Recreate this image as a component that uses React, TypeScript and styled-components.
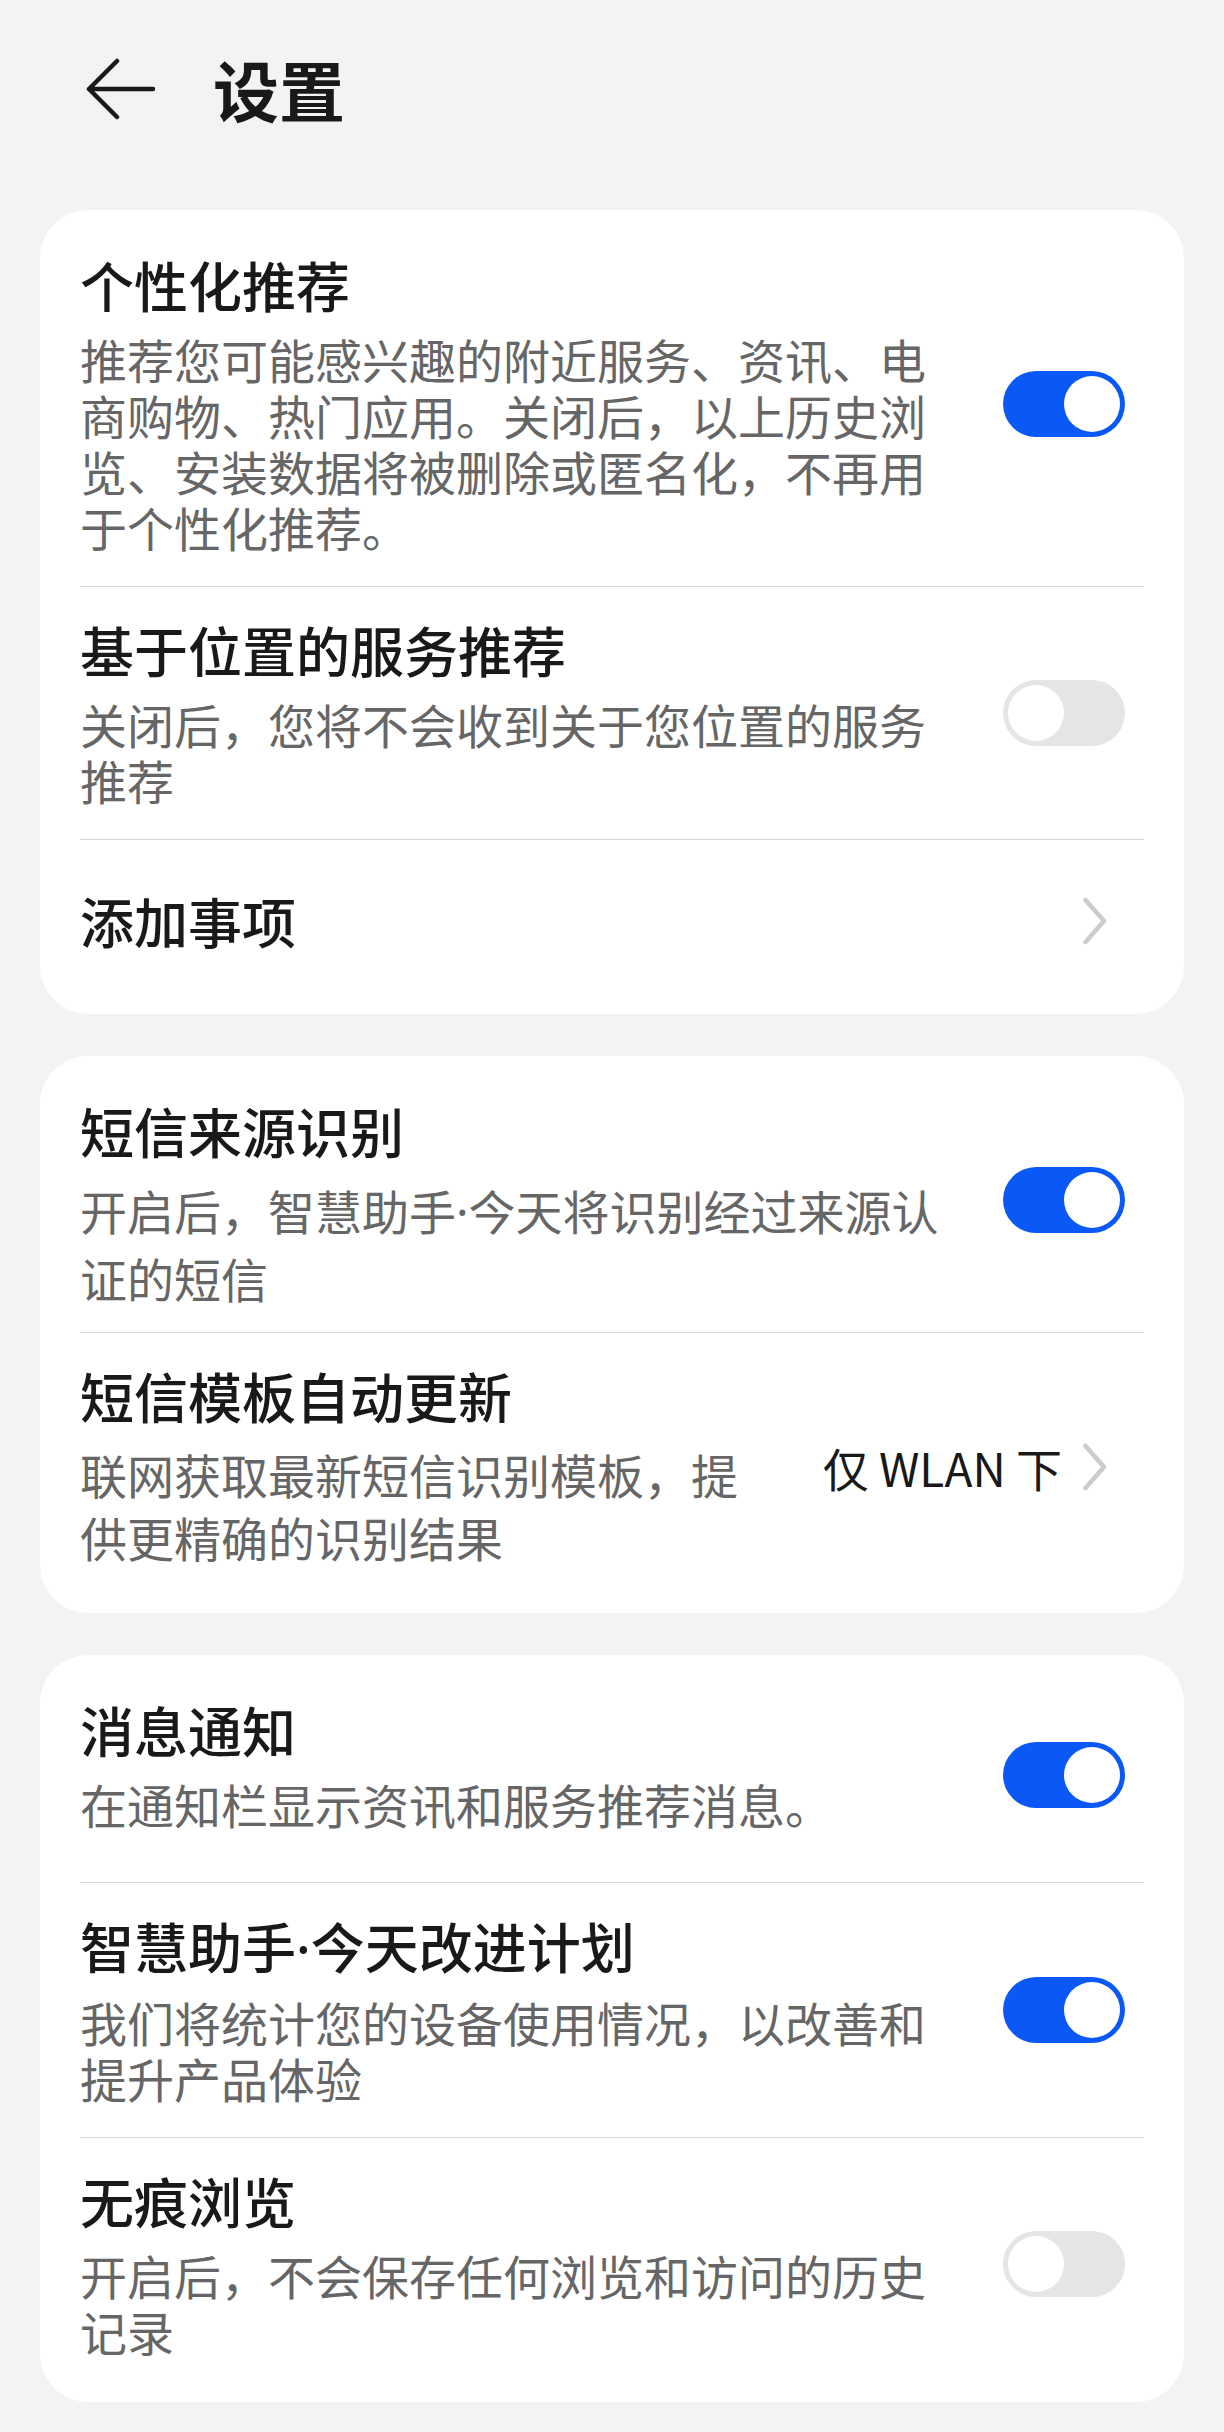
import React from "react";
import styled, { createGlobalStyle } from "styled-components";

const GlobalStyle = createGlobalStyle`
  html, body {
    margin: 0;
    padding: 0;
    background: #F1F3F5;
  }
  body {
    font-family: "Noto Sans CJK SC", "Noto Sans", sans-serif;
    -webkit-font-smoothing: antialiased;
  }
  * { box-sizing: border-box; }
`;

const Page = styled.div`
  width: 1224px;
  min-height: 2432px;
  background: #F1F3F5;
  padding-bottom: 29px;
`;

const Header = styled.header`
  height: 180px;
  display: flex;
  align-items: center;
  padding-left: 84px;
  gap: 55px;
  margin-bottom: 30px;
`;

const BackIcon = styled.svg`
  width: 74px;
  height: 64px;
  flex-shrink: 0;
`;

const PageTitle = styled.h1`
  margin: 0;
  font-size: 66px;
  line-height: 76px;
  font-weight: 700;
  color: #191919;
  transform: translateY(-2px);
`;

const Cards = styled.main`
  display: flex;
  flex-direction: column;
  gap: 42px;
  padding: 0 40px;
`;

const Card = styled.section`
  background: #ffffff;
  border-radius: 48px;
  padding: 12px 40px;
  display: flex;
  flex-direction: column;
`;

const Row = styled.div<{ $minHeight?: number; $divider?: boolean }>`
  display: flex;
  align-items: center;
  gap: 50px;
  min-height: ${(p) => (p.$minHeight ? `${p.$minHeight}px` : "auto")};
  border-bottom: ${(p) => (p.$divider ? "1.5px solid #D6D6D6" : "none")};
`;

const TextCol = styled.div<{ $padBottom?: number }>`
  flex: 1;
  min-width: 0;
  padding-top: 31px;
  padding-bottom: ${(p) => p.$padBottom ?? 31}px;
  display: flex;
  flex-direction: column;
  gap: 14px;
`;

const Title = styled.div`
  font-size: 54px;
  line-height: 64px;
  font-weight: 500;
  color: #191919;
`;

const Desc = styled.div<{ $lh?: number }>`
  font-size: 47px;
  line-height: ${(p) => p.$lh ?? 56}px;
  font-weight: 400;
  color: #666666;
`;

const Dot = styled.span`
  font-family: "Noto Sans", "Roboto", sans-serif;
`;

const Toggle = styled.span<{ $on: boolean }>`
  position: relative;
  flex-shrink: 0;
  width: 122px;
  height: 66px;
  border-radius: 33px;
  margin-right: 19px;
  background: ${(p) => (p.$on ? "#0A59F7" : "#E5E5E5")};
  &::after {
    content: "";
    position: absolute;
    top: 5px;
    left: ${(p) => (p.$on ? "61px" : "5px")};
    width: 56px;
    height: 56px;
    border-radius: 50%;
    background: #ffffff;
  }
`;

const Trailing = styled.div<{ $mr: number }>`
  display: flex;
  align-items: center;
  gap: 20px;
  flex-shrink: 0;
  margin-right: ${(p) => p.$mr}px;
`;

const Value = styled.span`
  font-size: 46px;
  line-height: 56px;
  color: #191919;
  white-space: nowrap;
`;

const ChevronSvg = styled.svg`
  width: 26px;
  height: 48px;
  flex-shrink: 0;
`;

const Chevron = () => (
  <ChevronSvg viewBox="0 0 26 48">
    <path
      d="M3.5 3 L22 24 L3.5 45"
      fill="none"
      stroke="#CCCCCC"
      strokeWidth="4.5"
      strokeLinecap="round"
      strokeLinejoin="round"
    />
  </ChevronSvg>
);

const withDots = (s: string) =>
  s.split("·").map((part, i) => (
    <React.Fragment key={i}>
      {i > 0 && <Dot>·</Dot>}
      {part}
    </React.Fragment>
  ));

type Item = {
  title: string;
  desc?: string;
  lh?: number;
  toggle?: boolean;
  value?: string;
  chevron?: boolean;
  minHeight?: number;
  padBottom?: number;
};

const groups: Item[][] = [
  [
    {
      title: "个性化推荐",
      desc: "推荐您可能感兴趣的附近服务、资讯、电商购物、热门应用。关闭后，以上历史浏览、安装数据将被删除或匿名化，不再用于个性化推荐。",
      toggle: true,
    },
    {
      title: "基于位置的服务推荐",
      desc: "关闭后，您将不会收到关于您位置的服务推荐",
      toggle: false,
    },
    { title: "添加事项", chevron: true, minHeight: 162 },
  ],
  [
    {
      title: "短信来源识别",
      desc: "开启后，智慧助手·今天将识别经过来源认证的短信",
      lh: 65,
      toggle: true,
      padBottom: 22,
    },
    {
      title: "短信模板自动更新",
      desc: "联网获取最新短信识别模板，提供更精确的识别结果",
      lh: 63,
      value: "仅 WLAN 下",
      chevron: true,
      padBottom: 33,
    },
  ],
  [
    {
      title: "消息通知",
      desc: "在通知栏显示资讯和服务推荐消息。",
      toggle: true,
      padBottom: 50,
    },
    {
      title: "智慧助手·今天改进计划",
      desc: "我们将统计您的设备使用情况，以改善和提升产品体验",
      toggle: true,
    },
    {
      title: "无痕浏览",
      desc: "开启后，不会保存任何浏览和访问的历史记录",
      toggle: false,
    },
  ],
];

export default function App() {
  return (
    <Page>
      <GlobalStyle />
      <Header>
        <BackIcon viewBox="0 0 74 64">
          <path
            d="M5 31 L33 3 M5 31 L33 59 M5 31 L69 31"
            fill="none"
            stroke="#191919"
            strokeWidth="4.5"
            strokeLinecap="round"
            strokeLinejoin="round"
          />
        </BackIcon>
        <PageTitle>设置</PageTitle>
      </Header>
      <Cards>
        {groups.map((items, gi) => (
          <Card key={gi}>
            {items.map((it, i) => (
              <Row key={i} $divider={i < items.length - 1} $minHeight={it.minHeight}>
                <TextCol $padBottom={it.padBottom}>
                  <Title>{withDots(it.title)}</Title>
                  {it.desc && <Desc $lh={it.lh}>{withDots(it.desc)}</Desc>}
                </TextCol>
                {it.toggle !== undefined && <Toggle $on={it.toggle} />}
                {it.chevron && (
                  <Trailing $mr={36}>
                    {it.value && <Value>{it.value}</Value>}
                    <Chevron />
                  </Trailing>
                )}
              </Row>
            ))}
          </Card>
        ))}
      </Cards>
    </Page>
  );
}
